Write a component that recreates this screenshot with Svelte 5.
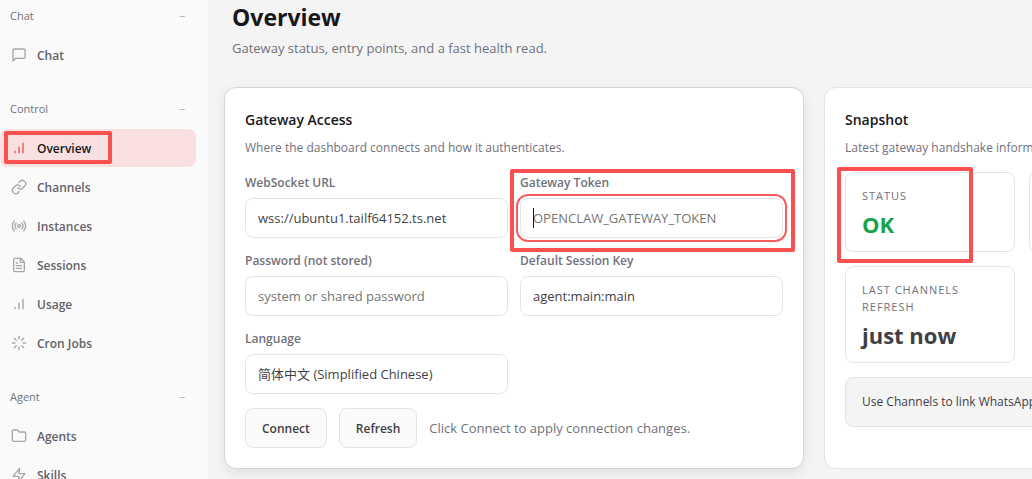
<script>
  const groups = [
    { name: 'Chat', items: [{ label: 'Chat', icon: 'message' }] },
    {
      name: 'Control',
      items: [
        { label: 'Overview', icon: 'bars', active: true },
        { label: 'Channels', icon: 'link' },
        { label: 'Instances', icon: 'radio' },
        { label: 'Sessions', icon: 'file' },
        { label: 'Usage', icon: 'bars' },
        { label: 'Cron Jobs', icon: 'loader' }
      ]
    },
    {
      name: 'Agent',
      items: [
        { label: 'Agents', icon: 'folder' },
        { label: 'Skills', icon: 'zap' }
      ]
    }
  ];

  const icons = {
    message: ['M21 15a2 2 0 0 1-2 2H7l-4 4V5a2 2 0 0 1 2-2h14a2 2 0 0 1 2 2z'],
    bars: ['M12 20V10', 'M18 20V4', 'M6 20v-4'],
    link: [
      'M10 13a5 5 0 0 0 7.54.54l3-3a5 5 0 0 0-7.07-7.07l-1.72 1.71',
      'M14 11a5 5 0 0 0-7.54-.54l-3 3a5 5 0 0 0 7.07 7.07l1.71-1.71'
    ],
    radio: [
      'M14 12a2 2 0 1 1-4 0a2 2 0 1 1 4 0',
      'M16.24 7.76a6 6 0 0 1 0 8.49',
      'M7.76 16.24a6 6 0 0 1 0-8.49',
      'M19.07 4.93a10 10 0 0 1 0 14.14',
      'M4.93 19.07a10 10 0 0 1 0-14.14'
    ],
    file: [
      'M14.5 2H6a2 2 0 0 0-2 2v16a2 2 0 0 0 2 2h12a2 2 0 0 0 2-2V7.5z',
      'M14 2v6h6',
      'M16 13H8',
      'M16 17H8',
      'M10 9H8'
    ],
    loader: [
      'M12 2v4',
      'M12 18v4',
      'M4.93 4.93l2.83 2.83',
      'M16.24 16.24l2.83 2.83',
      'M2 12h4',
      'M18 12h4',
      'M4.93 19.07l2.83-2.83',
      'M16.24 7.76l2.83-2.83'
    ],
    folder: [
      'M4 20h16a2 2 0 0 0 2-2V8a2 2 0 0 0-2-2h-8l-2-3H4a2 2 0 0 0-2 2v13a2 2 0 0 0 2 2z'
    ],
    zap: ['M13 2L3 14h9l-1 8 10-12h-9z']
  };

  let url = $state('wss://ubuntu1.tailf64152.ts.net');
  let token = $state('');
  let password = $state('');
  let sessionKey = $state('agent:main:main');
</script>

<div class="shell">
  <nav class="sidebar">
    {#each groups as group}
      <section class="group">
        <button class="group-label" type="button">
          <span>{group.name}</span><span class="dash">−</span>
        </button>
        <div class="items">
          {#each group.items as item}
            <a href="#{item.icon}" class="item" class:active={item.active}>
              <svg class:solid={item.icon === 'bars'} viewBox="0 0 24 24" aria-hidden="true">
                {#each icons[item.icon] as d}<path {d} />{/each}
              </svg>
              <span>{item.label}</span>
              {#if item.active}<i class="mark mark-nav"></i>{/if}
            </a>
          {/each}
        </div>
      </section>
    {/each}
  </nav>

  <main>
    <header>
      <h1>Overview</h1>
      <p>Gateway status, entry points, and a fast health read.</p>
    </header>

    <div class="cards">
      <section class="card raised">
        <h2>Gateway Access</h2>
        <p class="sub">Where the dashboard connects and how it authenticates.</p>
        <div class="fields">
          <div class="field">
            <label for="url">WebSocket URL</label>
            <input id="url" bind:value={url} />
          </div>
          <div class="field focused">
            <label for="token">Gateway Token</label>
            <input id="token" placeholder="OPENCLAW_GATEWAY_TOKEN" bind:value={token} />
            <i class="caret"></i>
            <i class="mark mark-token"></i>
          </div>
          <div class="field">
            <label for="password">Password (not stored)</label>
            <input id="password" type="password" placeholder="system or shared password" bind:value={password} />
          </div>
          <div class="field">
            <label for="session">Default Session Key</label>
            <input id="session" bind:value={sessionKey} />
          </div>
          <div class="field">
            <label for="language">Language</label>
            <select id="language"><option>简体中文 (Simplified Chinese)</option></select>
          </div>
        </div>
        <div class="actions">
          <button type="button" class="btn">Connect</button>
          <button type="button" class="btn">Refresh</button>
          <span>Click Connect to apply connection changes.</span>
        </div>
      </section>

      <section class="card">
        <h2>Snapshot</h2>
        <p class="sub">Latest gateway handshake information.</p>
        <div class="stats">
          <div class="stat">
            <div class="stat-label">Status</div>
            <div class="stat-value ok">OK</div>
            <i class="mark mark-status"></i>
          </div>
          <div class="stat"></div>
          <div class="stat"></div>
          <div class="stat">
            <div class="stat-label">Last Channels Refresh</div>
            <div class="stat-value">just now</div>
          </div>
        </div>
        <div class="callout">Use Channels to link WhatsApp</div>
      </section>
    </div>
  </main>
</div>

<style>
  :global(body) {
    margin: 0;
    overflow: hidden;
  }
  * {
    box-sizing: border-box;
  }
  .shell {
    display: grid;
    grid-template-columns: 208px minmax(0, 1fr);
    height: 100vh;
    overflow: hidden;
    background: #f4f4f4;
    color: #3f3f46;
    font-family: 'Open Sans', 'Noto Sans CJK SC', sans-serif;
    font-size: 13px;
  }
  h1,
  h2,
  p {
    margin: 0;
  }
  button,
  input,
  select {
    font: inherit;
    color: inherit;
  }

  .sidebar {
    display: flex;
    flex-direction: column;
    gap: 21px;
    padding: 2px 12px 0 0;
    background: #fafafa;
    overflow: hidden;
  }
  .group {
    display: flex;
    flex-direction: column;
    gap: 6px;
    flex: none;
  }
  .group-label {
    display: flex;
    justify-content: space-between;
    align-items: center;
    height: 28px;
    padding: 0 11px 2px 10px;
    border: 0;
    background: none;
    color: #71717a;
    font-size: 11px;
    font-weight: 500;
  }
  .dash {
    color: #a1a1aa;
  }
  .items {
    display: flex;
    flex-direction: column;
    gap: 1px;
  }
  .item {
    position: relative;
    display: flex;
    align-items: center;
    gap: 10px;
    height: 38px;
    padding: 0 11px;
    border-radius: 8px;
    color: #63636b;
    font-size: 12px;
    font-weight: 600;
    text-decoration: none;
  }
  .item svg {
    width: 16px;
    height: 16px;
    fill: none;
    stroke: #a6a6ab;
    stroke-width: 2;
    stroke-linecap: round;
    stroke-linejoin: round;
  }
  .item svg.solid {
    stroke: #bebec2;
    stroke-width: 3;
    stroke-linecap: butt;
  }
  .item.active {
    background: #f8e0e0;
    color: #18181b;
  }
  .item.active svg {
    stroke: #e88484;
  }

  .mark {
    position: absolute;
    border: 4px solid #fb5050;
    border-radius: 2px;
    pointer-events: none;
  }
  .mark-nav {
    inset: 2px 84px 3px 4px;
  }
  .mark-token {
    inset: -3px -12px -14px -10px;
  }
  .mark-status {
    inset: -6px 41px -12px -9px;
  }

  main {
    overflow: hidden;
    padding: 0 16px;
  }
  header {
    padding: 0 8px;
  }
  h1 {
    font-size: 23px;
    line-height: 34px;
    font-weight: 700;
    color: #18181b;
  }
  header p {
    margin: 4px 0 29px;
    font-size: 13px;
    line-height: 20px;
    color: #71717a;
  }
  .cards {
    display: grid;
    grid-template-columns: repeat(2, minmax(580px, 1fr));
    gap: 20px;
  }
  .card {
    padding: 20px;
    border: 1px solid #e4e4e7;
    border-radius: 12px;
    background: #fff;
  }
  .card.raised {
    border-color: #d4d4d8;
    box-shadow: 0 4px 12px rgba(0, 0, 0, 0.08);
  }
  h2 {
    font-size: 14px;
    line-height: 24px;
    font-weight: 600;
    color: #18181b;
  }
  .sub {
    margin: 6px 0 14px;
    font-size: 12px;
    line-height: 20px;
    color: #71717a;
  }
  .fields {
    display: grid;
    grid-template-columns: 1fr 1fr;
    gap: 12px;
  }
  .field {
    position: relative;
    display: flex;
    flex-direction: column;
    gap: 4px;
  }
  .field label {
    font-size: 12px;
    line-height: 22px;
    font-weight: 600;
    color: #71717a;
  }
  input,
  select {
    width: 100%;
    height: 40px;
    padding: 0 12px;
    border: 1px solid #e4e4e7;
    border-radius: 8px;
    background: #fff;
    outline: none;
    appearance: none;
  }
  input::placeholder {
    color: #757575;
    opacity: 1;
  }
  .focused input {
    outline: 2px solid #fb5c5c;
    outline-offset: 2px;
  }
  .caret {
    position: absolute;
    left: 13px;
    bottom: 10px;
    width: 1px;
    height: 20px;
    background: #18181b;
  }
  .actions {
    display: flex;
    align-items: center;
    gap: 12px;
    margin-top: 14px;
    color: #71717a;
  }
  .btn {
    height: 40px;
    padding: 0 16px;
    border: 1px solid #e4e4e7;
    border-radius: 8px;
    background: #fafafa;
    color: #3f3f46;
    font-size: 12px;
    font-weight: 600;
  }

  .stats {
    display: grid;
    grid-template-columns: repeat(3, 1fr);
    gap: 14px;
  }
  .stat {
    position: relative;
    padding: 14px 16px 12px;
    border: 1px solid #e4e4e7;
    border-radius: 8px;
  }
  .stat-label {
    font-size: 11px;
    line-height: 17px;
    font-weight: 500;
    text-transform: uppercase;
    letter-spacing: 1px;
    color: #71717a;
  }
  .stat-value {
    margin-top: 6px;
    font-size: 22px;
    line-height: 29px;
    font-weight: 700;
  }
  .ok {
    color: #16a34a;
  }
  .callout {
    margin-top: 14px;
    padding: 14px 16px;
    border: 1px solid #e4e4e7;
    border-radius: 8px;
    background: #f4f4f5;
    font-size: 12px;
    line-height: 20px;
    white-space: nowrap;
  }
</style>
